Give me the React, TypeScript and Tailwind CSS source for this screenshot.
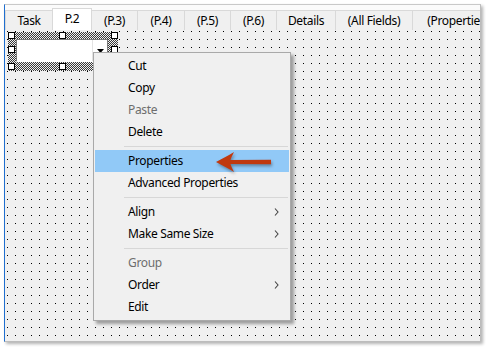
import React from 'react';

const tabs = [
  { label: 'Task', w: 'w-[48px]' },
  { label: 'P.2', w: 'w-[40px]', active: true },
  { label: '(P.3)', w: 'w-[47px]' },
  { label: '(P.4)', w: 'w-[48px]' },
  { label: '(P.5)', w: 'w-[47px]' },
  { label: '(P.6)', w: 'w-[47px]' },
  { label: 'Details', w: 'w-[60px]' },
  { label: '(All Fields)', w: 'w-[78px]' },
  { label: '(Properties)', w: 'w-[92px]' },
];

type Item = { label?: string; disabled?: boolean; sub?: boolean; active?: boolean; sep?: boolean };

const items: Item[] = [
  { label: 'Cut' },
  { label: 'Copy' },
  { label: 'Paste', disabled: true },
  { label: 'Delete' },
  { sep: true },
  { label: 'Properties', active: true },
  { label: 'Advanced Properties' },
  { sep: true },
  { label: 'Align', sub: true },
  { label: 'Make Same Size', sub: true },
  { sep: true },
  { label: 'Group', disabled: true },
  { label: 'Order', sub: true },
  { label: 'Edit' },
];

function Handle({ pos }: { pos: string }) {
  return <div className={`absolute w-[7px] h-[7px] bg-white border border-black ${pos}`} />;
}

function Chevron() {
  return (
    <svg width="5" height="8" viewBox="0 0 5 8" className="mr-[10px]">
      <path d="M1 0.5 L4 4 L1 7.5" fill="none" stroke="#444" strokeWidth="1.1" />
    </svg>
  );
}

export default function App() {
  return (
    <div className="w-[488px] h-[351px] bg-white pt-[4px] pl-[4px] font-['Noto_Sans',sans-serif] text-[12px] tracking-[-0.35px] text-black overflow-hidden">
      <div className="w-[477px] h-[338px] flex flex-col border-t border-t-[#c9c9c9] border-l border-l-[#1f6fd0] border-r border-r-[#bcbcbc] border-b border-b-[#bcbcbc] bg-[#fbfbfb] shadow-[2px_2px_3px_rgba(0,0,0,0.3)] overflow-hidden">
        {/* tab strip */}
        <div className="h-[25px] flex items-end shrink-0">
          {tabs.map((t) => (
            <div
              key={t.label}
              className={`shrink-0 flex items-center justify-center border border-b-0 border-[#d9d9d9] -ml-px first:ml-0 whitespace-nowrap ${t.w} ${
                t.active ? 'h-[22px] bg-white relative z-10 pb-[2px]' : 'h-[20px] bg-[#f0f0f0]'
              }`}
            >
              {t.label}
            </div>
          ))}
        </div>

        {/* design canvas */}
        <div className="relative flex-1 bg-[#f0f0f0] bg-[linear-gradient(to_right,#f0f0f0_7px,transparent_7px),linear-gradient(to_bottom,#f0f0f0_7px,#000_7px)] bg-[size:8px_8px] bg-[position:-5px_-6px]">
          {/* selected combo box */}
          <div className="absolute left-[3px] top-[2px] w-[110px] h-[39px] bg-[repeating-conic-gradient(#3a3a3a_0_25%,#f0f0f0_0_50%)] bg-[size:2px_2px]">
            <div className="absolute left-[8px] top-[7px] w-[92px] h-[23px] bg-white border border-[#7a7a7a] border-b-white flex justify-end">
              <div className="w-[15px] h-full flex items-center justify-center border-l border-[#e3e3e3]">
                <svg width="7" height="4" viewBox="0 0 7 4">
                  <path d="M0 0 H7 L3.5 4 Z" fill="#000" />
                </svg>
              </div>
            </div>
            <Handle pos="left-0 top-0" />
            <Handle pos="left-[51px] top-0" />
            <Handle pos="left-[103px] top-0" />
            <Handle pos="left-0 top-[14px]" />
            <Handle pos="left-[103px] top-[14px]" />
            <Handle pos="left-0 top-[31px]" />
            <Handle pos="left-[51px] top-[31px]" />
            <Handle pos="left-[103px] top-[31px]" />
          </div>

          {/* context menu */}
          <div className="absolute left-[88px] top-[22px] w-[198px] bg-[#f0f0f0] border border-[#a9a9a9] py-[2px] px-[1px] shadow-[3px_3px_3px_rgba(0,0,0,0.35)] z-20">
            {items.map((it, i) =>
              it.sep ? (
                <div key={i} className="h-[7px] flex items-center pl-[29px] pr-[1px]">
                  <div className="h-px w-full bg-[#d7d7d7]" />
                </div>
              ) : (
                <div
                  key={i}
                  className={`h-[22px] flex items-center justify-between pl-[33px] ${
                    it.active ? 'bg-[#91c9f7]' : ''
                  } ${it.disabled ? 'text-[#6d6d6d]' : 'text-black'}`}
                >
                  <span>{it.label}</span>
                  {it.sub && <Chevron />}
                </div>
              )
            )}
            {/* red pointer arrow */}
            <svg
              className="absolute left-[118px] top-[96px] drop-shadow-[1px_2px_1.5px_rgba(0,0,0,0.35)]"
              width="62"
              height="26"
              viewBox="0 0 62 26"
            >
              <path
                d="M4 13 C10 10 17 6 22 3 C20 7 19 9 18.5 11 L59 10.8 L59 15.2 L18.5 15 C19 17 20 19 22 23 C17 20 10 16 4 13 Z"
                fill="#c0390f"
              />
            </svg>
          </div>
        </div>
      </div>
    </div>
  );
}
